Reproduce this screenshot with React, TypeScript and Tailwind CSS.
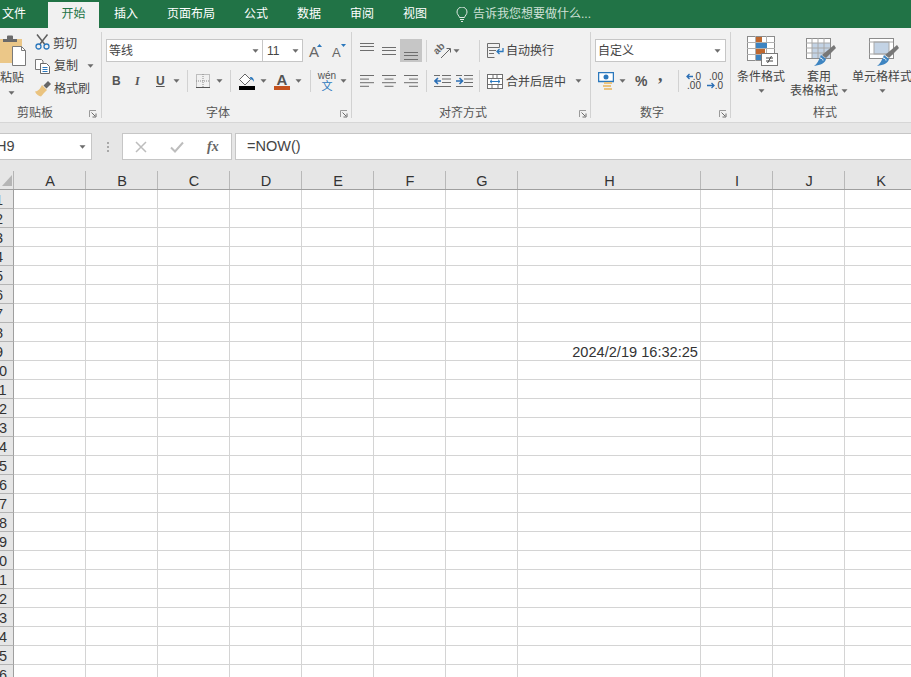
import React from "react";

const Caret = ({ className = "" }: { className?: string }) => (
  <svg width="7" height="4" viewBox="0 0 7 4" className={"shrink-0 " + className}>
    <path d="M0.5 0.2h6L3.5 3.8z" fill="#6b6b6b" />
  </svg>
);

const Launcher = () => (
  <svg width="8" height="8" viewBox="0 0 8 8" className="shrink-0">
    <path d="M0.5 7V0.5H7" fill="none" stroke="#9a9a9a" />
    <path d="M2.5 2.5L6 6M3.5 7H7V3.5" fill="none" stroke="#6b6b6b" />
  </svg>
);

const Sep = ({ className = "" }: { className?: string }) => (
  <div className={"w-px h-[22px] bg-[#d2d2d2] shrink-0 " + className} />
);

const Lines = ({ kind }: { kind: "top" | "mid" | "bot" | "left" | "center" | "right" }) => {
  const c = "#6e6e6e";
  if (kind === "top" || kind === "mid" || kind === "bot") {
    const ys = kind === "top" ? [1.5, 4.5, 8.5] : kind === "mid" ? [5.5, 8.5, 12.5] : [10.5, 13.5, 17.5];
    return (
      <svg width="14" height="18" viewBox="0 0 14 18" className="shrink-0">
        {ys.map((y) => (
          <path key={y} d={`M0 ${y}H14`} stroke={c} />
        ))}
      </svg>
    );
  }
  const rows: [number, number][] =
    kind === "left"
      ? [[0, 14], [0, 9], [0, 14], [0, 9]]
      : kind === "center"
      ? [[0, 14], [2.5, 11.5], [0, 14], [2.5, 11.5]]
      : [[0, 14], [5, 14], [0, 14], [5, 14]];
  return (
    <svg width="14" height="14" viewBox="0 0 14 14" className="shrink-0">
      {rows.map((r, i) => (
        <path key={i} d={`M${r[0]} ${1.5 + i * 3.6}H${r[1]}`} stroke={c} />
      ))}
    </svg>
  );
};

const Indent = ({ inc }: { inc?: boolean }) => (
  <svg width="17" height="14" viewBox="0 0 17 14" className="shrink-0">
    <path d="M8 1.5H17M8 5H17M8 8.5H17M0 12.5H17M0 1.5H6" stroke="#6e6e6e" />
    {inc ? (
      <path d="M0 7H6M3.5 4L6.5 7L3.5 10" stroke="#2b6fb5" strokeWidth="1.6" fill="none" />
    ) : (
      <path d="M7 7H1M4 4L1 7L4 10" stroke="#2b6fb5" strokeWidth="1.6" fill="none" />
    )}
  </svg>
);

const Decimal = ({ inc }: { inc?: boolean }) => (
  <div className="w-[16px] h-[19px] flex flex-col items-end text-[10px] leading-[9.5px] text-[#444] shrink-0">
    <div className="flex items-center h-[9.5px]">
      {inc ? (
        <svg width="7" height="7" viewBox="0 0 7 7"><path d="M7 3.5H1M3.5 1L1 3.5L3.5 6" stroke="#2b6fb5" strokeWidth="1.3" fill="none" /></svg>
      ) : null}
      <span>{inc ? ".0" : ".00"}</span>
    </div>
    <div className="flex items-center h-[9.5px]">
      {!inc ? (
        <svg width="8" height="7" viewBox="0 0 8 7"><path d="M0 3.5H7M4.5 1L7 3.5L4.5 6" stroke="#2b6fb5" strokeWidth="1.3" fill="none" /></svg>
      ) : null}
      <span>{inc ? ".00" : ".0"}</span>
    </div>
  </div>
);

const GroupLabel = ({ text, left, launcher }: { text: string; left: string; launcher: string }) => (
  <div className="flex items-start h-[14px] mt-auto text-[12px] leading-[14px] text-[#555]">
    <span className={"shrink-0 mt-[2px] " + left}>{text}</span>
    <div className={"shrink-0 mt-[6px] flex " + launcher}><Launcher /></div>
  </div>
);

const StyleBrush = ({ cells }: { cells: boolean }) => (
  <svg width="30" height="29" viewBox="0 0 30 29" className="shrink-0">
    <rect x="0.5" y="0.5" width="24" height="20" fill="#fff" stroke="#8c8c8c" />
    {cells ? (
      <>
        <rect x="6" y="5" width="18" height="15" fill="#c3d3e5" />
        <path d="M0 5H24M0 10H24M0 15H24M6 0V20M12 0V20M18 0V20" stroke="#a8a8a8" />
      </>
    ) : (
      <>
        <rect x="5" y="4" width="15" height="12" fill="#c3d3e5" stroke="#a8a8a8" />
        <path d="M0 4H24M0 16H24" stroke="#a8a8a8" />
      </>
    )}
    <path d="M28 7l2 3-10 10-4-3z" fill="#777" />
    <path d="M15 17l5 4c-1 4-5 6-12 7 3-2 5-6 7-11z" fill="#3d84c1" />
    <path d="M14 20c1.5 0 3 1 3 2.500" stroke="#fff" fill="none" />
  </svg>
);

const colWidths: [string, string][] = [
  ["A", "w-[72px]"], ["B", "w-[72px]"], ["C", "w-[72px]"], ["D", "w-[72px]"], ["E", "w-[72px]"], ["F", "w-[72px]"],
  ["G", "w-[72px]"], ["H", "w-[183px]"], ["I", "w-[72px]"], ["J", "w-[72px]"], ["K", "w-[72px]"],
];
const rows = Array.from({ length: 26 }, (_, i) => i + 1);

export default function App() {
  return (
    <div className="w-[911px] h-[677px] overflow-hidden flex flex-col bg-white font-['Liberation_Sans','Noto_Sans_CJK_SC',sans-serif] text-[#444]">
      {/* Tabs */}
      <div className="h-[28px] bg-[#217346] flex text-[12px] text-white shrink-0">
        <div className="w-[48px] pl-[2px] pt-[6px] leading-[16px]">文件</div>
        <div className="w-[51px] mt-[2px] bg-[#f1f1f1] text-[#217346] text-center pt-[4px] leading-[16px]">开始</div>
        <div className="ml-[15px] w-[24px] pt-[6px] leading-[16px]">插入</div>
        <div className="ml-[29px] w-[48px] pt-[6px] leading-[16px]">页面布局</div>
        <div className="ml-[29px] w-[24px] pt-[6px] leading-[16px]">公式</div>
        <div className="ml-[29px] w-[24px] pt-[6px] leading-[16px]">数据</div>
        <div className="ml-[29px] w-[24px] pt-[6px] leading-[16px]">审阅</div>
        <div className="ml-[29px] w-[24px] pt-[6px] leading-[16px]">视图</div>
        <div className="ml-[29px] pt-[7px]">
          <svg width="12" height="15" viewBox="0 0 12 15">
            <path d="M3.5 10.500C3 8.500 1 7.500 1 5a5 5 0 0 1 10 0c0 2.500-2 3.500-2.500 5.500zM4 12.500H8M5 14.500H7" fill="none" stroke="#dfe9e3" />
          </svg>
        </div>
        <div className="ml-[5px] pt-[6px] leading-[16px] text-[#cfe0d6] whitespace-nowrap">告诉我您想要做什么...</div>
      </div>

      {/* Ribbon */}
      <div className="h-[95px] shrink-0 bg-[#f1f1f1] border-b border-[#d6d6d6] flex pt-[4px] pb-[4px] overflow-hidden">
        {/* Clipboard */}
        <div className="w-[102px] shrink-0 border-r border-[#d2d2d2] flex flex-col">
          <div className="flex">
            <div className="w-[35px] shrink-0 flex flex-col">
              <svg width="26" height="31" viewBox="0 0 26 31" className="mt-[3px]">
                <rect x="-2" y="4" width="24" height="24" fill="#ebc788" />
                <path d="M3 7V4H7V1.500a1 1 0 0 1 1-1h4a1 1 0 0 1 1 1V4H17V7z" fill="#6a6a6a" />
                <path d="M12.500 11.500H21.500L25.500 15.500V30.500H12.500z" fill="#fff" stroke="#7a7a7a" />
                <path d="M21.500 11.500V15.500H25.500" fill="none" stroke="#7a7a7a" />
              </svg>
              <div className="text-[12px] leading-[14px] mt-[5px] whitespace-nowrap">粘贴</div>
              <Caret className="ml-[8px] mt-[6px]" />
            </div>
            <div className="flex flex-col pt-[1px] text-[12px] leading-[16px]">
              <div className="flex items-center h-[22px]">
                <svg width="15" height="16" viewBox="0 0 15 16" className="shrink-0 -mt-[4px]">
                  <path d="M2 0.500L9.500 10M12.500 0.500L5 10" stroke="#5f5f5f" strokeWidth="1.500" />
                  <circle cx="3.500" cy="12.500" r="2.500" fill="none" stroke="#2b78bd" strokeWidth="1.300" />
                  <circle cx="11.500" cy="12.500" r="2.500" fill="none" stroke="#2b78bd" strokeWidth="1.300" />
                </svg>
                <span className="ml-[3px] whitespace-nowrap">剪切</span>
              </div>
              <div className="flex items-center h-[22px]">
                <svg width="15" height="15" viewBox="0 0 15 15" className="shrink-0">
                  <path d="M0.500 0.500H6.500L8 2V10.500H0.500z" fill="#fff" stroke="#7a7a7a" />
                  <path d="M5.500 4.500H11.500L14.500 7.500V14.500H5.500z" fill="#fff" stroke="#6a6a6a" />
                  <path d="M7.500 8.500H12.500M7.500 10.500H12.500M7.500 12.500H12.500" stroke="#2b78bd" />
                </svg>
                <span className="ml-[4px] whitespace-nowrap">复制</span>
                <Caret className="ml-[9px]" />
              </div>
              <div className="flex items-center h-[22px] mt-[1px]">
                <svg width="16" height="16" viewBox="0 0 16 16" className="shrink-0">
                  <path d="M7 4l5 5-3 3-3 3.500c-2-.5-5-2-6-5 2 0 4-2 5-3z" fill="#eac37f" />
                  <path d="M8.500 4.500l3 3L16 3 13 0z" fill="#666" />
                </svg>
                <span className="ml-[3px] whitespace-nowrap">格式刷</span>
              </div>
            </div>
          </div>
          <GroupLabel text="剪贴板" left="ml-[17px]" launcher="ml-[36px]" />
        </div>

        {/* Font */}
        <div className="w-[250px] shrink-0 border-r border-[#d2d2d2] flex flex-col">
          <div className="flex items-center mt-[7px] h-[23px] ml-[4px]">
            <div className="w-[157px] h-[23px] shrink-0 bg-white border border-[#c6c6c6] flex items-center pl-[2px] pr-[3px] text-[12px]">
              <span>等线</span>
              <Caret className="ml-auto" />
            </div>
            <div className="w-[41px] h-[23px] shrink-0 -ml-px bg-white border border-[#c6c6c6] flex items-center pl-[4px] pr-[3px] text-[12px]">
              <span>11</span>
              <Caret className="ml-auto" />
            </div>
            <div className="ml-[6px] flex items-start h-[16px] w-[14px] shrink-0">
              <span className="text-[15px] leading-[18px] text-[#666]">A</span>
              <svg width="5" height="3" viewBox="0 0 5 3" className="shrink-0 mt-[1px] -ml-[2px]"><path d="M0 3L2.500 0L5 3z" fill="#2b78bd" /></svg>
            </div>
            <div className="ml-[9px] flex items-start h-[16px] w-[14px] shrink-0">
              <span className="text-[13px] leading-[20px] text-[#666]">A</span>
              <svg width="5" height="3" viewBox="0 0 5 3" className="shrink-0 mt-[1px]"><path d="M0 0L2.500 3L5 0z" fill="#2b78bd" /></svg>
            </div>
          </div>
          <div className="flex items-center h-[22px] mt-[8px] ml-[10px] text-[#555]">
            <span className="w-[8px] text-[12px] font-bold font-['Liberation_Sans']">B</span>
            <span className="ml-[15px] w-[7px] text-[12px] font-bold italic font-['Liberation_Serif']">I</span>
            <span className="ml-[14px] w-[10px] text-[12px] font-bold underline font-['Liberation_Sans']">U</span>
            <Caret className="ml-[7px]" />
            <Sep className="ml-[7px]" />
            <svg width="14" height="14" viewBox="0 0 14 14" className="ml-[8px] shrink-0">
              <path d="M0.500 0.500H13.500V13.500H0.500zM0 7H14M7 0V14" fill="none" stroke="#8a8a8a" strokeDasharray="1 1" />
              <path d="M0 13.500H14" stroke="#555" />
            </svg>
            <Caret className="ml-[6px]" />
            <Sep className="ml-[7px]" />
            <div className="ml-[7px] w-[17px] shrink-0 flex flex-col items-center">
              <svg width="17" height="13" viewBox="0 0 17 13">
                <path d="M7 1L1.500 6.500L7 12L12.500 6.500z" fill="#fff" stroke="#666" />
                <path d="M12 4c3 0 4 2 4 5-1-2-2-2.500-3.500-2.500z" fill="#2b78bd" />
              </svg>
              <div className="w-[16px] h-[4px] bg-black" />
            </div>
            <Caret className="ml-[5px]" />
            <div className="ml-[7px] w-[16px] shrink-0 flex flex-col items-center">
              <span className="text-[15px] leading-[13px] font-bold text-[#555]">A</span>
              <div className="w-[16px] h-[4px] bg-[#c5531f]" />
            </div>
            <Caret className="ml-[5px]" />
            <Sep className="ml-[8px]" />
            <div className="ml-[8px] w-[16px] shrink-0 flex flex-col items-center text-[10px] leading-[10px]">
              <span className="text-[#555]">wén</span>
              <span className="text-[#2b78bd] text-[11px] leading-[11px]">文</span>
            </div>
            <Caret className="ml-[5px]" />
          </div>
          <GroupLabel text="字体" left="ml-[104px]" launcher="ml-[110px]" />
        </div>

        {/* Alignment */}
        <div className="w-[239px] shrink-0 border-r border-[#d2d2d2] flex flex-col">
          <div className="flex items-center mt-[7px] h-[23px]">
            <div className="ml-[8px] flex items-center"><Lines kind="top" /></div>
            <div className="ml-[8px] flex items-center"><Lines kind="mid" /></div>
            <div className="ml-[4px] w-[22px] h-[23px] bg-[#c6c6c6] flex items-center justify-center"><Lines kind="bot" /></div>
            <Sep className="ml-[4px]" />
            <svg width="17" height="16" viewBox="0 0 17 16" className="ml-[7px] shrink-0 overflow-visible">
              <text x="3" y="12" fontSize="10" fontWeight="bold" fill="#666" transform="rotate(-45 3 12)" fontFamily="Liberation Sans">ab</text>
              <path d="M7 15L16 6M12.500 5.500H16.500V9.500" fill="none" stroke="#666" />
            </svg>
            <Caret className="ml-[2px]" />
            <Sep className="ml-[19px]" />
            <svg width="17" height="15" viewBox="0 0 17 15" className="ml-[7px] shrink-0">
              <path d="M0.500 0.500H12.500V4.500H0.500zM0.500 4.500V14.500H7.500" fill="none" stroke="#6e6e6e" />
              <path d="M2 7.500H9M2 10.500H7" stroke="#6e6e6e" />
              <path d="M16 5V8.500H10M12.500 6L10 8.500L12.500 11" fill="none" stroke="#2b78bd" strokeWidth="1.300" />
            </svg>
            <span className="ml-[2px] text-[12px] whitespace-nowrap">自动换行</span>
          </div>
          <div className="flex items-center h-[22px] mt-[8px]">
            <div className="ml-[8px] flex"><Lines kind="left" /></div>
            <div className="ml-[8px] flex"><Lines kind="center" /></div>
            <div className="ml-[8px] flex"><Lines kind="right" /></div>
            <Sep className="ml-[8px]" />
            <div className="ml-[7px] flex"><Indent /></div>
            <div className="ml-[5px] flex"><Indent inc /></div>
            <Sep className="ml-[6px]" />
            <svg width="16" height="15" viewBox="0 0 16 15" className="ml-[7px] shrink-0">
              <rect x="0.500" y="0.500" width="15" height="14" fill="#fff" stroke="#6e6e6e" />
              <path d="M0 4.500H16M0 10.500H16M6 0V4M10 0V4M5 11V15M11 11V15" stroke="#6e6e6e" />
              <path d="M3 7.500H13M5 5.800L3 7.500L5 9.200M11 5.800L13 7.500L11 9.200" fill="none" stroke="#2b78bd" />
            </svg>
            <span className="ml-[3px] mt-[2px] text-[12px] whitespace-nowrap">合并后居中</span>
            <Caret className="ml-[9px]" />
          </div>
          <GroupLabel text="对齐方式" left="ml-[87px]" launcher="ml-[92px]" />
        </div>

        {/* Number */}
        <div className="w-[140px] shrink-0 border-r border-[#d2d2d2] flex flex-col">
          <div className="flex items-center mt-[7px] h-[23px] ml-[4px]">
            <div className="w-[131px] h-[23px] shrink-0 bg-white border border-[#c6c6c6] flex items-center pl-[2px] pr-[4px] text-[12px]">
              <span>自定义</span>
              <Caret className="ml-auto" />
            </div>
          </div>
          <div className="flex items-center h-[22px] mt-[8px] ml-[7px]">
            <svg width="16" height="18" viewBox="0 0 16 18" className="shrink-0">
              <rect x="0.500" y="0.500" width="15" height="9" fill="#fff" stroke="#2b78bd" strokeWidth="1.500" />
              <circle cx="8" cy="5" r="2.500" fill="#2b78bd" />
              <rect x="6" y="10" width="8" height="2" fill="#eac37f" />
              <rect x="5" y="13" width="8" height="2" fill="#eac37f" />
              <rect x="6" y="16" width="8" height="2" fill="#eac37f" />
            </svg>
            <Caret className="ml-[5px]" />
            <span className="ml-[9px] text-[14px] font-bold text-[#555] w-[13px] font-['Liberation_Sans']">%</span>
            <span className="ml-[10px] text-[18px] font-bold text-[#555] w-[7px] leading-[14px] pb-[12px] font-['Liberation_Serif']">,</span>
            <Sep className="ml-[13px]" />
            <div className="ml-[6px] flex"><Decimal inc /></div>
            <div className="ml-[6px] flex"><Decimal /></div>
          </div>
          <GroupLabel text="数字" left="ml-[49px]" launcher="ml-[55px]" />
        </div>

        {/* Styles */}
        <div className="flex-1 flex flex-col">
          <div className="flex text-[12px] leading-[14px] mt-[4px]">
            <div className="ml-[6px] w-[48px] shrink-0 flex flex-col items-center">
              <svg width="31" height="30" viewBox="0 0 31 30" className="shrink-0 ml-[3px]">
                <rect x="0.500" y="0.500" width="27" height="24" fill="#fff" stroke="#8c8c8c" />
                <path d="M0 6.500H28M0 12.500H28M0 18.500H28M8.500 0V25M19.500 0V25" stroke="#b0b0b0" />
                <rect x="9" y="1" width="6" height="5" fill="#c0682f" />
                <rect x="9" y="7" width="11" height="5" fill="#3d84c1" />
                <rect x="9" y="13" width="9" height="5" fill="#c0682f" />
                <rect x="9" y="19" width="5" height="5" fill="#3d84c1" />
                <rect x="14.500" y="17.500" width="16" height="12" fill="#fff" stroke="#7a7a7a" />
                <path d="M19 22H26M19 25H26M24.500 20L20.500 27" stroke="#444" />
              </svg>
              <span className="mt-[4px] whitespace-nowrap">条件格式</span>
              <Caret className="mt-[5px]" />
            </div>
            <div className="ml-[5px] w-[62px] shrink-0 flex flex-col">
              <div className="ml-[16px] mt-[2px]"><StyleBrush cells /></div>
              <span className="ml-[17px] mt-[3px] whitespace-nowrap">套用</span>
              <div className="flex items-center">
                <span className="whitespace-nowrap">表格格式</span>
                <Caret className="ml-[3px]" />
              </div>
            </div>
            <div className="w-[60px] shrink-0 flex flex-col items-center">
              <div className="mt-[2px] ml-[4px]"><StyleBrush cells={false} /></div>
              <span className="mt-[3px] whitespace-nowrap">单元格样式</span>
              <Caret className="mt-[5px]" />
            </div>
          </div>
          <div className="flex items-start h-[14px] mt-auto text-[12px] leading-[14px] text-[#555]">
            <span className="ml-[82px] mt-[2px]">样式</span>
          </div>
        </div>
      </div>

      {/* Formula bar */}
      <div className="h-[45px] shrink-0 bg-[#e6e6e6] flex items-start pt-[10px] pb-[8px]">
        <div className="w-[92px] h-[27px] shrink-0 bg-white border border-l-0 border-[#c6c6c6] flex items-center pr-[5px] text-[14.5px] overflow-hidden">
          <span className="-ml-[4px]">H9</span>
          <Caret className="ml-auto" />
        </div>
        <div className="ml-[15px] w-[2px] h-[10px] mt-[9px] shrink-0 flex flex-col justify-between">
          <div className="h-[2px] bg-[#a8a8a8]" />
          <div className="h-[2px] bg-[#a8a8a8]" />
          <div className="h-[2px] bg-[#a8a8a8]" />
        </div>
        <div className="ml-[13px] w-[110px] h-[27px] shrink-0 bg-white border border-[#c6c6c6] flex items-center">
          <svg width="12" height="12" viewBox="0 0 12 12" className="ml-[12px] shrink-0">
            <path d="M1 1L11 11M11 1L1 11" stroke="#bdbdbd" strokeWidth="1.500" />
          </svg>
          <svg width="14" height="12" viewBox="0 0 14 12" className="ml-[23px] shrink-0">
            <path d="M1 6.500L5 10.500L13 1.500" fill="none" stroke="#bdbdbd" strokeWidth="2" />
          </svg>
          <span className="ml-[23px] text-[14px] italic font-bold text-[#666] font-['Liberation_Serif']">fx</span>
        </div>
        <div className="ml-[3px] flex-1 h-[27px] bg-white border border-r-0 border-[#c6c6c6] flex items-center pl-[11px] text-[14.5px] text-[#444]">
          =NOW()
        </div>
      </div>

      {/* Column headers */}
      <div className="h-[22px] shrink-0 flex bg-[#e6e6e6] border-b border-[#9f9f9f]">
        <div className="w-[14px] shrink-0 pt-[3px]">
          <div className="h-full border-r border-[#b4b4b4] flex items-end justify-end pr-[1px] pb-[3px] overflow-hidden">
            <svg width="10" height="11" viewBox="0 0 10 11" className="shrink-0"><path d="M10 0V11H0z" fill="#b5b5b5" /></svg>
          </div>
        </div>
        {colWidths.map(([l, w]) => (
          <div key={l} className={w + " shrink-0 pt-[3px]"}>
            <div className="h-full border-r border-[#b8b8b8] flex items-center justify-center pt-[3px] pl-[1px] text-[14.5px] leading-[15px] text-[#333]">{l}</div>
          </div>
        ))}
      </div>

      {/* Grid */}
      <div className="flex-1 overflow-hidden">
        {rows.map((r) => (
          <div key={r} className="h-[19px] flex">
            <div className="w-[14px] shrink-0 bg-[#e6e6e6] border-r border-b border-r-[#9f9f9f] border-b-[#b4b4b4] overflow-hidden">
              <div className="w-[26px] -ml-[14px] text-center text-[14.5px] leading-[18px] text-[#333] pt-px">{r}</div>
            </div>
            {colWidths.map(([l, w]) => (
              <div key={l} className={w + " shrink-0 border-r border-b border-[#d4d4d4] text-right text-[14.6px] leading-[18px] text-[#333] pt-px pr-[2px] whitespace-nowrap"}>
                {l === "H" && r === 9 ? "2024/2/19 16:32:25" : null}
              </div>
            ))}
          </div>
        ))}
      </div>
    </div>
  );
}
